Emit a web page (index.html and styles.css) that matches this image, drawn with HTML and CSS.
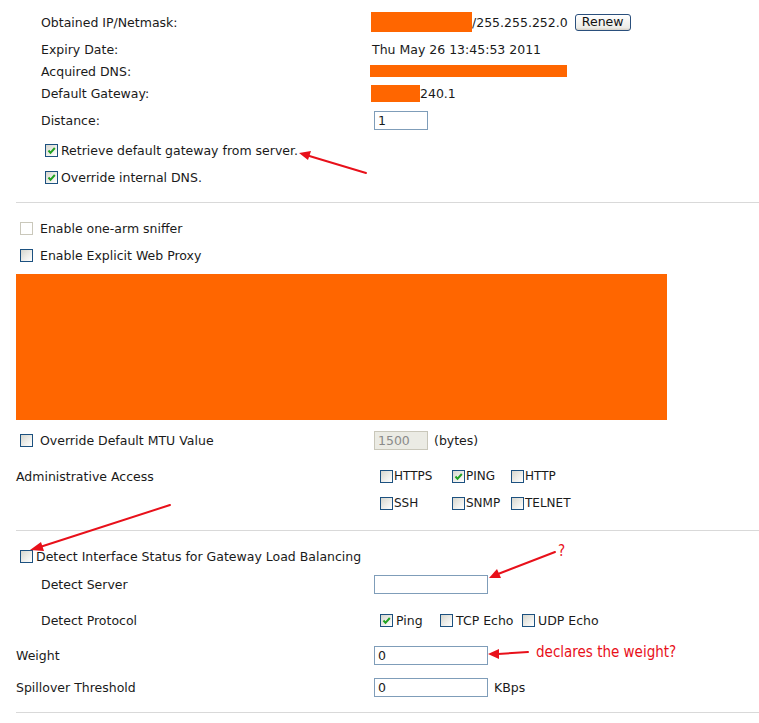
FILE: index.html
```html
<!DOCTYPE html>
<html>
<head>
<meta charset="utf-8">
<link rel="stylesheet" href="styles.css">
</head>
<body>
<div class="page">
  <section class="sec">
    <div class="row r1">
      <div class="lbl ind">Obtained IP/Netmask:</div>
      <div class="val v1"><span class="redact r-ip"></span><span>/255.255.252.0</span><button class="btn">Renew</button></div>
    </div>
    <div class="row mt5">
      <div class="lbl ind">Expiry Date:</div>
      <div class="val v2">Thu May 26 13:45:53 2011</div>
    </div>
    <div class="row">
      <div class="lbl ind">Acquired DNS:</div>
      <div class="val"><span class="redact r-dns"></span></div>
    </div>
    <div class="row">
      <div class="lbl ind">Default Gateway:</div>
      <div class="val v1"><span class="redact r-gw"></span><span>240.1</span></div>
    </div>
    <div class="row mt5">
      <div class="lbl ind">Distance:</div>
      <div class="val"><span class="inp w54">1</span></div>
    </div>
    <div class="row mt8">
      <label class="chk ind2"><span class="cb on"><svg viewBox="0 0 11 11"><path d="M2.5 5.5 L4.5 7.8 L8.8 3" /></svg></span><span>Retrieve default gateway from server.</span></label>
    </div>
    <div class="row mt5">
      <label class="chk ind2"><span class="cb on"><svg viewBox="0 0 11 11"><path d="M2.5 5.5 L4.5 7.8 L8.8 3" /></svg></span><span>Override internal DNS.</span></label>
    </div>
    <div class="divider d1"></div>
  </section>

  <section class="sec">
    <div class="row mt14">
      <label class="chk ind3 wide"><span class="cb off"></span><span>Enable one-arm sniffer</span></label>
    </div>
    <div class="row mt5">
      <label class="chk ind3 wide"><span class="cb"></span><span>Enable Explicit Web Proxy</span></label>
    </div>
    <div class="block"></div>
    <div class="row mt9">
      <label class="lbl chk ind3 wide"><span class="cb"></span><span>Override Default MTU Value</span></label>
      <div class="val"><span class="inp w54 dis">1500</span><span class="unit">(bytes)</span></div>
    </div>
    <div class="row mt14">
      <div class="lbl">Administrative Access</div>
      <div class="val"><div class="access">
        <label class="opt"><span class="cb"></span>HTTPS</label>
        <label class="opt"><span class="cb on"><svg viewBox="0 0 11 11"><path d="M2.5 5.5 L4.5 7.8 L8.8 3" /></svg></span>PING</label>
        <label class="opt"><span class="cb"></span>HTTP</label>
      </div></div>
    </div>
    <div class="row mt5">
      <div class="lbl"></div>
      <div class="val"><div class="access">
        <label class="opt"><span class="cb"></span>SSH</label>
        <label class="opt"><span class="cb"></span>SNMP</label>
        <label class="opt"><span class="cb"></span>TELNET</label>
      </div></div>
    </div>
    <div class="divider d2"></div>
  </section>

  <section class="sec">
    <div class="row mt14">
      <label class="chk ind3"><span class="cb"></span><span>Detect Interface Status for Gateway Load Balancing</span></label>
    </div>
    <div class="row mt6">
      <div class="lbl ind">Detect Server</div>
      <div class="val"><span class="inp w114"></span></div>
    </div>
    <div class="row mt14">
      <div class="lbl ind">Detect Protocol</div>
      <div class="val"><div class="proto">
        <label class="opt p1"><span class="cb on"><svg viewBox="0 0 11 11"><path d="M2.5 5.5 L4.5 7.8 L8.8 3" /></svg></span>Ping</label>
        <label class="opt p2"><span class="cb"></span>TCP Echo</label>
        <label class="opt"><span class="cb"></span>UDP Echo</label>
      </div></div>
    </div>
    <div class="row mt13">
      <div class="lbl">Weight</div>
      <div class="val"><span class="inp w114">0</span><span class="note">declares the weight?</span></div>
    </div>
    <div class="row mt10">
      <div class="lbl">Spillover Threshold</div>
      <div class="val"><span class="inp w114">0</span><span class="unit">KBps</span></div>
    </div>
    <div class="divider d3"></div>
  </section>

  <svg class="arrows" width="759" height="723" viewBox="0 0 759 723">
    <g stroke="#e8101a" stroke-width="2" fill="none" stroke-linecap="round">
      <line x1="366" y1="173" x2="306" y2="155"/>
      <line x1="170" y1="505" x2="40" y2="547"/>
      <line x1="555" y1="552" x2="498" y2="574"/>
      <line x1="528" y1="652" x2="498" y2="654"/>
    </g>
    <g fill="#e8101a">
      <polygon points="299,153 311,151 308,160"/>
      <polygon points="30,550 41,542 44,551"/>
      <polygon points="489,578 497,569 501,578"/>
      <polygon points="488,654 499,649 499,659"/>
    </g>
    <text x="558" y="556" class="qmark">?</text>
  </svg>
</div>
</body>
</html>
```

FILE: styles.css
```css
html, body {
  margin: 0;
  padding: 0;
  background: #ffffff;
}

.page {
  position: relative;
  width: 759px;
  height: 723px;
  overflow: hidden;
  padding-left: 16px;
  box-sizing: border-box;
  font-family: "DejaVu Sans", Verdana, sans-serif;
  font-size: 12.5px;
  color: #1a1a1a;
}

.sec {
  display: flex;
  flex-direction: column;
}

.row {
  display: grid;
  grid-template-columns: 354px 1fr;
  align-items: center;
  height: 22px;
}

.r1 { margin-top: 11px; }
.mt5 { margin-top: 5px; }
.mt6 { margin-top: 6px; }
.mt8 { margin-top: 8px; }
.mt9 { margin-top: 9px; }
.mt10 { margin-top: 10px; }
.mt13 { margin-top: 13px; }
.mt14 { margin-top: 14px; }

.lbl { white-space: nowrap; }
.ind { padding-left: 25px; }
.ind2 { padding-left: 29px; }
.ind3 { padding-left: 4px; }

.val {
  display: flex;
  align-items: center;
  white-space: nowrap;
}

.v1 { padding-left: 1px; }
.v2 { padding-left: 2px; }

.redact {
  display: inline-block;
  background: #ff6600;
}
.r-ip { width: 101px; height: 20px; }
.r-dns { width: 197px; height: 12px; }
.r-gw { width: 49px; height: 17px; }

.btn {
  margin-left: 7px;
  height: 17px;
  width: 56px;
  padding: 0;
  font-family: "DejaVu Sans", sans-serif;
  font-size: 12.5px;
  color: #111;
  border: 1px solid #2a4f7c;
  border-radius: 3px;
  background: linear-gradient(#ffffff, #ecebe6 85%, #d6d0c5);
  line-height: 14px;
}

.inp {
  display: inline-block;
  box-sizing: border-box;
  height: 19px;
  margin-left: 4px;
  border: 1px solid #7f9db9;
  background: #fff;
  padding-left: 3px;
  line-height: 17px;
  font-size: 12.5px;
}
.w54 { width: 54px; }
.w114 { width: 114px; }
.dis {
  background: #ebebe4;
  border-color: #c9c7ba;
  color: #8a8a8a;
}

.unit { margin-left: 6px; }

.chk {
  display: flex;
  align-items: center;
  gap: 3px;
  grid-column: 1 / 3;
  white-space: nowrap;
}
.lbl.chk { grid-column: auto; }
.wide { gap: 7px; }

.cb {
  display: inline-flex;
  align-items: center;
  justify-content: center;
  box-sizing: border-box;
  width: 13px;
  height: 13px;
  flex: none;
  border: 1px solid #1c5180;
  background: linear-gradient(135deg, #d6d6ce 0%, #eeeeea 55%, #ffffff 100%);
}
.cb.off {
  border-color: #cac8bb;
  background: #ffffff;
}
.cb svg {
  width: 11px;
  height: 11px;
}
.cb svg path {
  fill: none;
  stroke: #21a121;
  stroke-width: 2;
}

.block {
  margin-top: 8px;
  width: 651px;
  height: 146px;
  background: #ff6600;
}

.access {
  display: grid;
  grid-template-columns: 72px 59px auto;
  padding-left: 10px;
  font-size: 12px;
}

.opt {
  display: flex;
  align-items: center;
  gap: 1px;
}

.proto {
  display: flex;
  padding-left: 10px;
}
.proto .opt { gap: 3px; }
.p1 { width: 60px; }
.p2 { width: 82px; }

.note {
  margin-left: 48px;
  margin-top: -6px;
  color: #e8101a;
  font-family: "Liberation Sans Narrow", "DejaVu Sans Condensed", sans-serif;
  font-size: 15px;
}

.divider {
  height: 1px;
  background: #d9d9d9;
  width: 743px;
}
.d1 { margin-top: 14px; }
.d2 { margin-top: 16px; }
.d3 { margin-top: 14px; }

.arrows {
  position: absolute;
  left: 0;
  top: 0;
  pointer-events: none;
}
.qmark {
  fill: #e8101a;
  font-family: "Liberation Sans Narrow", "DejaVu Sans Condensed", sans-serif;
  font-size: 15px;
}
```
